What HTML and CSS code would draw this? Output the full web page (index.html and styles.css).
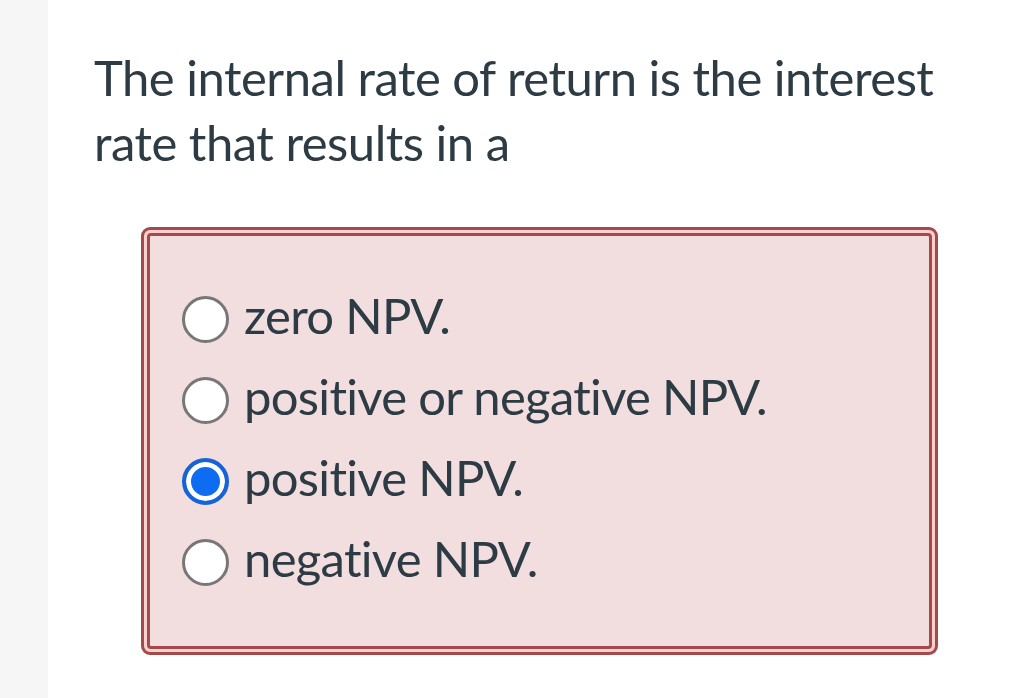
FILE: index.html
```html
<!DOCTYPE html>
<html>
<head>
<meta charset="utf-8">
<link rel="stylesheet" href="styles.css">
</head>
<body>
<div class="page">
  <div class="strip"></div>
  <main class="content">
    <p class="question">The internal rate of return is the interest rate that results in a</p>
    <div class="answers-outer">
      <div class="answers">
        <label class="option"><span class="radio"></span><span class="opt-text">zero NPV.</span></label>
        <label class="option"><span class="radio"></span><span class="opt-text">positive or negative NPV.</span></label>
        <label class="option"><span class="radio checked"></span><span class="opt-text">positive NPV.</span></label>
        <label class="option"><span class="radio"></span><span class="opt-text">negative NPV.</span></label>
      </div>
    </div>
  </main>
</div>
</body>
</html>
```

FILE: styles.css
```css
html, body {
  margin: 0;
  padding: 0;
  background: #ffffff;
}
body {
  font-family: "Lato", "Open Sans", sans-serif;
  color: #2d3b45;
  font-variant-ligatures: none;
}
.page {
  display: flex;
  min-height: 698px;
}
.strip {
  width: 48px;
  flex: none;
  background: #f6f6f6;
}
.content {
  flex: 1;
  padding: 45px 0 0 46px;
}
.question {
  margin: 0;
  width: 870px;
  font-size: 49px;
  line-height: 65px;
  letter-spacing: -0.5px;
}
.answers-outer {
  margin: 52px 0 0 47px;
  width: 785px;
  border: 3px solid #a34a4a;
  border-radius: 9px;
  padding: 3px;
  background: #f9cfcf;
}
.answers {
  border: 3px solid #a34a4a;
  border-radius: 4px;
  background: #f2dedf;
  padding: 39px 32px 47px;
}
.option {
  display: flex;
  align-items: center;
  height: 81px;
  font-size: 49px;
  line-height: 81px;
  letter-spacing: -0.7px;
}
.radio {
  box-sizing: border-box;
  width: 47px;
  height: 47px;
  flex: none;
  border: 3px solid #777777;
  border-radius: 50%;
  background: #ffffff;
  margin: 7px 15px 0 0;
}
.radio.checked {
  border: 4px solid #1763d6;
  background: #0d6cf2;
  box-shadow: inset 0 0 0 5px #ffffff;
}
.opt-text {
  white-space: nowrap;
}
```
